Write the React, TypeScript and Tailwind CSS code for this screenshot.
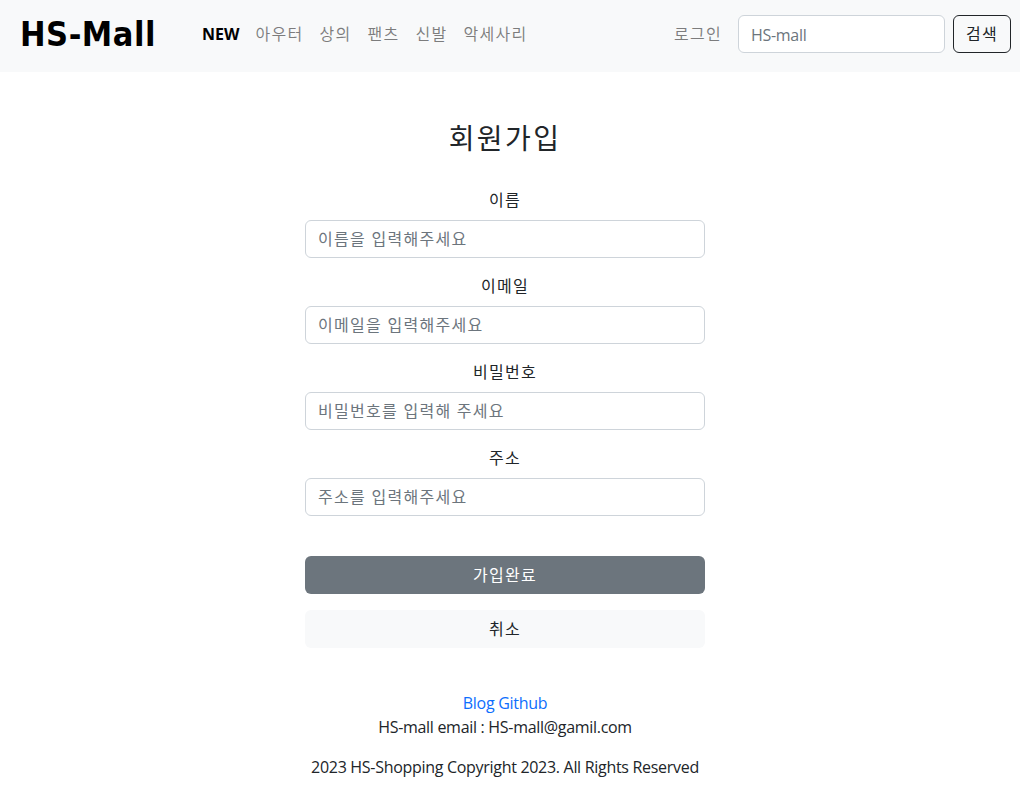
const navLinks = ["아우터", "상의", "팬츠", "신발", "악세사리"];

const fields = [
  { label: "이름", placeholder: "이름을 입력해주세요" },
  { label: "이메일", placeholder: "이메일을 입력해주세요" },
  { label: "비밀번호", placeholder: "비밀번호를 입력해 주세요" },
  { label: "주소", placeholder: "주소를 입력해주세요" },
];

function Header() {
  return (
    <nav className="flex h-[72px] items-center bg-[#f8f9fa] pb-1 pl-5 pr-[9px]">
      {/* Logo */}
      <a className="w-[182px] text-[34px] leading-none font-bold tracking-[0.5px] text-black [font-family:'DejaVu_Sans_Condensed','DejaVu_Sans',sans-serif]">
        HS-Mall
      </a>

      {/* Links */}
      <div className="flex items-center gap-4 text-base">
        <a className="font-bold text-black">NEW</a>
        {navLinks.map((item) => (
          <a key={item} className="tracking-[1.28px] text-[#00000080]">
            {item}
          </a>
        ))}
      </div>

      {/* Actions */}
      <div className="ml-auto flex items-center">
        <a className="mr-4 text-base tracking-[1.28px] text-[#00000080]">로그인</a>
        <input
          placeholder="HS-mall"
          className="mr-2 h-[38px] w-[207px] rounded-md border border-[#ced4da] bg-white px-3 pt-0.5 text-base tracking-[-0.3px] placeholder:text-[#6c757d]"
        />
        <button className="h-[38px] w-[58px] rounded-md border border-[#212529] text-base tracking-[1.28px] text-[#212529]">
          검색
        </button>
      </div>
    </nav>
  );
}

function SignupForm() {
  return (
    <main className="mx-auto flex w-[400px] flex-col items-center pt-[46px]">
      <h2 className="mb-[30px] text-[28px] leading-[40px] font-normal tracking-[2.4px] text-[#212529]">회원가입</h2>
      <form className="flex w-full flex-col">
        {fields.map((field) => (
          <div key={field.label} className="mb-4 flex flex-col items-center">
            <label className="mb-2 text-base leading-6 tracking-[1.28px] text-[#212529]">{field.label}</label>
            <input
              placeholder={field.placeholder}
              className="h-[38px] w-full rounded-md border border-[#ced4da] bg-white px-3 text-base tracking-[1.28px] placeholder:text-[#6c757d]"
            />
          </div>
        ))}
        <button type="button" className="mt-6 h-[38px] rounded-md bg-[#6c757d] text-base tracking-[1.28px] text-white">
          가입완료
        </button>
        <button type="button" className="mt-4 h-[38px] rounded-md bg-[#f8f9fa] text-base tracking-[1.28px] text-[#212529]">
          취소
        </button>
      </form>
    </main>
  );
}

function Footer() {
  return (
    <footer className="mt-[43px] flex flex-col items-center text-base leading-6 tracking-[-0.3px] text-[#212529]">
      <a className="text-[#0d6efd]">Blog Github</a>
      <p>HS-mall email : HS-mall@gamil.com</p>
      <p className="mt-4">2023 HS-Shopping Copyright 2023. All Rights Reserved</p>
    </footer>
  );
}

export default function App() {
  return (
    <div className="min-h-[798px] bg-white [font-family:'Open_Sans','Noto_Sans_CJK_KR',sans-serif]">
      <Header />
      {/* page content sits 5px left of the navbar centre in the reference */}
      <div className="w-[1010px]">
        <SignupForm />
        <Footer />
      </div>
    </div>
  );
}
